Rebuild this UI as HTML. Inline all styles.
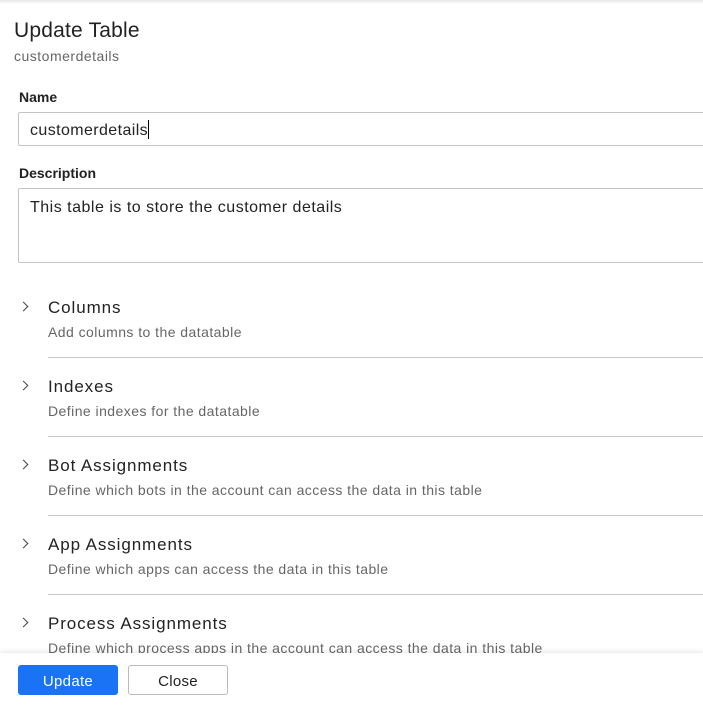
<!DOCTYPE html>
<html><head><style>
*{margin:0;padding:0;box-sizing:border-box}
body{width:703px;height:707px;overflow:hidden;background:#fff;font-family:"Liberation Sans",sans-serif;color:#222;position:relative}
.topsh{position:absolute;left:0;top:0;width:703px;height:4px;background:linear-gradient(#e6e6e6,#fff)}
.a{position:absolute;white-space:nowrap}
.inp{position:absolute;left:18px;width:700px;border:1px solid #c4c4c4;border-radius:2px}
.chev{position:absolute;left:20px;width:7px;height:7px;border-right:1.3px solid #444;border-top:1.3px solid #444;transform:rotate(45deg)}
.st{position:absolute;left:48px;font-size:17px;letter-spacing:0.9px;color:#222;white-space:nowrap}
.sd{position:absolute;left:48px;font-size:14px;letter-spacing:0.45px;color:#666;white-space:nowrap}
.hr{position:absolute;left:48px;width:660px;height:1px;background:#c8c8c8}
.foot{position:absolute;left:0;top:653px;width:703px;height:54px;background:#fff;box-shadow:0 -2px 4px rgba(0,0,0,0.08)}
.btn{position:absolute;top:12px;height:30px;width:100px;border-radius:3px;font-size:15px;text-align:center;line-height:33px;letter-spacing:0.3px}
</style></head><body>
<div class="topsh"></div>
<div class="a" style="left:14px;top:19px;font-size:21px;letter-spacing:0.2px;color:#222">Update Table</div>
<div class="a" style="left:14px;top:48px;font-size:14px;letter-spacing:0.5px;color:#666">customerdetails</div>
<div class="a" style="left:19px;top:89px;font-size:14px;font-weight:bold;color:#222">Name</div>
<div class="inp" style="top:112px;height:34px"><span class="a" style="left:11px;top:7px;font-size:16px;letter-spacing:0.4px;color:#222">customerdetails<span style="display:inline-block;width:1px;height:19px;background:#000;vertical-align:-4px"></span></span></div>
<div class="a" style="left:19px;top:165px;font-size:14px;font-weight:bold;color:#222">Description</div>
<div class="inp" style="top:188px;height:75px"><span class="a" style="left:11px;top:10px;font-size:16px;letter-spacing:0.5px;color:#222">This table is to store the customer details</span></div>

<div class="chev" style="top:303px"></div><div class="st" style="top:298px">Columns</div><div class="sd" style="top:324px">Add columns to the datatable</div><div class="hr" style="top:357px"></div>
<div class="chev" style="top:382px"></div><div class="st" style="top:377px">Indexes</div><div class="sd" style="top:403px">Define indexes for the datatable</div><div class="hr" style="top:436px"></div>
<div class="chev" style="top:461px"></div><div class="st" style="top:456px">Bot Assignments</div><div class="sd" style="top:482px">Define which bots in the account can access the data in this table</div><div class="hr" style="top:515px"></div>
<div class="chev" style="top:540px"></div><div class="st" style="top:535px">App Assignments</div><div class="sd" style="top:561px">Define which apps can access the data in this table</div><div class="hr" style="top:594px"></div>
<div class="chev" style="top:619px"></div><div class="st" style="top:614px">Process Assignments</div><div class="sd" style="top:640px">Define which process apps in the account can access the data in this table</div>

<div class="foot">
<div class="btn" style="left:18px;background:#1a73f5;color:#fff">Update</div>
<div class="btn" style="left:128px;border:1px solid #bbb;color:#222;line-height:31px">Close</div>
</div>
</body></html>
